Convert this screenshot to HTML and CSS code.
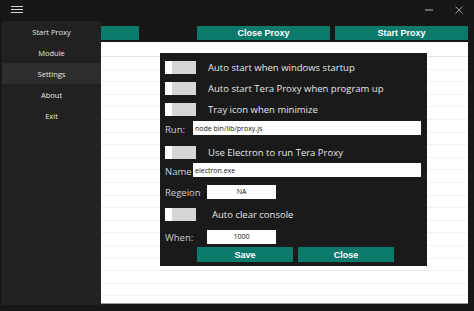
FILE: index.html
```html
<html lang="en">
    <head>
        <meta charset="utf-8" />
        <title>Tera Proxy</title>
        <link rel="stylesheet" href="styles.css">
    </head>
    <body>
        <div id="titlebar">
            <svg id="menu" width="12" height="8" viewBox="0 0 12 8">
                <path d="M0 0.5H12M0 3.5H12M0 6.5H12" stroke="#d8d8d8" stroke-width="1"/>
            </svg>
            <div id="controls">
                <svg width="8" height="8" viewBox="0 0 8 8"><path d="M0 4H8" stroke="#bbb" stroke-width="1"/></svg>
                <svg width="8" height="8" viewBox="0 0 8 8"><path d="M0.5 0.5L7.5 7.5M7.5 0.5L0.5 7.5" stroke="#999" stroke-width="1"/></svg>
            </div>
        </div>

        <div id="main">
            <div id="toolbar">
                <div class="btn first"></div>
                <div class="btn wide">Close Proxy</div>
                <div class="btn wide">Start Proxy</div>
            </div>
            <div id="grid">
                <div class="grid-head"></div>
                <div class="grid-rows"></div>

                <div id="dialog">
                    <div class="row r1"><span class="toggle"></span><span class="opt">Auto start when windows startup</span></div>
                    <div class="row r2"><span class="toggle"></span><span class="opt">Auto start Tera Proxy when program up</span></div>
                    <div class="row r2"><span class="toggle"></span><span class="opt">Tray icon when minimize</span></div>
                    <div class="row r3"><span class="lbl">Run:</span><span class="field long">node bin/lib/proxy.js</span></div>
                    <div class="row r4"><span class="toggle"></span><span class="opt">Use Electron to run Tera Proxy</span></div>
                    <div class="row r5"><span class="lbl">Name</span><span class="field long">electron.exe</span></div>
                    <div class="row r2"><span class="lbl wide-lbl">Regeion</span><span class="field short">NA</span></div>
                    <div class="row r6"><span class="toggle"></span><span class="opt shift">Auto clear console</span></div>
                    <div class="row r7"><span class="lbl wide-lbl">When:</span><span class="field short">1000</span></div>
                    <div class="row r5 buttons">
                        <div class="btn action">Save</div>
                        <div class="btn action">Close</div>
                    </div>
                </div>
            </div>
        </div>

        <div id="sidebar">
            <div class="item">Start Proxy</div>
            <div class="item">Module</div>
            <div class="item active">Settings</div>
            <div class="item">About</div>
            <div class="item">Exit</div>
        </div>
    </body>
</html>
```
FILE: styles.css
```css
body{
    margin: 0;
    width: 474px;
    height: 311px;
    background: #171717;
    overflow: hidden;
    position: relative;
    font-family: "Open Sans", "Noto Sans", sans-serif;
}
#titlebar{
    height: 22px;
    display: flex;
    align-items: center;
    justify-content: space-between;
    padding: 0 11px 0 11px;
    box-sizing: border-box;
}
#menu{
    margin-top: -3px;
}
#controls{
    display: flex;
    gap: 22px;
    margin-top: -2px;
}
#main{
    margin-left: 100px;
    width: 368px;
}
#toolbar{
    display: flex;
    margin-top: 4px;
    height: 14px;
}
.btn{
    background: #0b7a6b;
    color: #fff;
    font-family: "Liberation Sans", Arial, sans-serif;
    font-weight: bold;
    font-size: 9px;
    display: flex;
    align-items: center;
    justify-content: center;
}
.first{
    width: 39px;
    margin-right: 58px;
}
.wide{
    width: 133px;
}
.wide + .wide{
    margin-left: 5px;
}
#grid{
    position: relative;
    margin-top: 2px;
    height: 261px;
    background: #fff;
    border-bottom: 1px solid #9a9a9a;
}
.grid-head{
    height: 14px;
    border-bottom: 1px solid #e6e6e6;
}
.grid-rows{
    height: 246px;
    background: repeating-linear-gradient(#fff 0, #fff 11.6px, #f3f3f3 11.6px, #f3f3f3 12.6px);
}
#dialog{
    position: absolute;
    left: 60px;
    top: 11px;
    width: 267px;
    height: 213px;
    box-sizing: border-box;
    background: #1a1a1a;
    padding: 8px 5px 0 5px;
    color: #e6e6e6;
    font-size: 9.5px;
}
.row{
    display: flex;
    align-items: center;
    height: 13px;
}
.r2{ margin-top: 8px; }
.r3{ margin-top: 5px; height: 14px; }
.r4{ margin-top: 11px; }
.r5{ margin-top: 4px; height: 14px; }
.r6{ margin-top: 10px; }
.r7{ margin-top: 9px; }
.toggle{
    width: 24px;
    height: 13px;
    background: #d6d6d6;
    border-left: 7px solid #fff;
    flex: none;
}
.opt{
    margin-left: 12px;
    white-space: nowrap;
}
.shift{
    margin-left: 16px;
}
.lbl{
    width: 28px;
    color: #d0d0d0;
    padding-top: 2px;
    white-space: nowrap;
}
.wide-lbl{
    width: 42px;
}
.field{
    background: #fff;
    color: #111;
    font-size: 7px;
    height: 14px;
    display: flex;
    align-items: center;
    box-sizing: border-box;
    padding-left: 2px;
}
.long{
    width: 228px;
}
.short{
    width: 69px;
    justify-content: center;
    padding-left: 0;
}
.buttons{
    height: 15px;
    margin-left: 32px;
    gap: 5px;
}
.action{
    width: 96px;
    height: 15px;
    font-size: 9px;
}
#sidebar{
    position: absolute;
    left: 2px;
    top: 21px;
    width: 99px;
    height: 284px;
    background: #212121;
}
.item{
    height: 21px;
    display: flex;
    align-items: center;
    justify-content: center;
    color: #e6e6e6;
    font-size: 7.5px;
}
.active{
    background: #2d2d2d;
}
```
